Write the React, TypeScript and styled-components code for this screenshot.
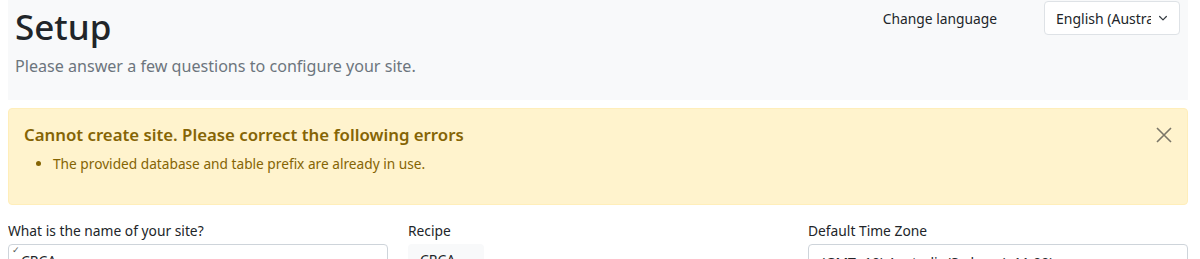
import React from 'react';
import styled, {createGlobalStyle} from 'styled-components';

const GlobalStyle = createGlobalStyle`
  body {
    margin: 0 12px 0 8px;
    font-family: "Noto Sans", "Open Sans", sans-serif;
    color: #212529;
    background: #fff;
  }
`;

const App: React.FC = () => {
  return (
    <>
      <GlobalStyle />
      <Jumbotron>
        <TitleBlock>
          <Title>Setup</Title>
          <Lead>Please answer a few questions to configure your site.</Lead>
        </TitleBlock>
        <LanguageGroup>
          <LanguageLabel>Change language</LanguageLabel>
          <LanguageSelect>
            <SelectText>English (Australia)</SelectText>
            <Chevron viewBox='0 0 16 16'>
              <path d='M3.5 6l4.5 4.5L12.5 6' fill='none' stroke='#343a40' strokeWidth='1.6' strokeLinecap='round' strokeLinejoin='round' />
            </Chevron>
          </LanguageSelect>
        </LanguageGroup>
      </Jumbotron>

      <Alert>
        <AlertBody>
          <AlertHeading>Cannot create site. Please correct the following errors</AlertHeading>
          <ErrorList>
            <li>The provided database and table prefix are already in use.</li>
          </ErrorList>
        </AlertBody>
        <CloseButton aria-label='Close'>
          <svg width='16' height='16' viewBox='0 0 16 16'>
            <path d='M1 1l14 14M15 1L1 15' stroke='#7a7668' strokeWidth='1.6' />
          </svg>
        </CloseButton>
      </Alert>

      <FormRow>
        <Field>
          <Label>What is the name of your site?</Label>
          <TextInput>
            <Check>✓</Check>
            CRCA
          </TextInput>
        </Field>
        <Field>
          <Label>Recipe</Label>
          <RecipeButton>
            CRCA <Caret>▼</Caret>
          </RecipeButton>
        </Field>
        <Field $last>
          <Label>Default Time Zone</Label>
          <SelectBox>
            <span>(GMT+10) Australia/Sydney (+11:00)</span>
            <Chevron viewBox='0 0 16 16'>
              <path d='M3.5 6l4.5 4.5L12.5 6' fill='none' stroke='#343a40' strokeWidth='1.6' strokeLinecap='round' strokeLinejoin='round' />
            </Chevron>
          </SelectBox>
        </Field>
      </FormRow>
    </>
  );
};

export default App;

const Jumbotron = styled.div`
  display: flex;
  justify-content: space-between;
  align-items: flex-start;
  height: 100px;
  box-sizing: border-box;
  background: #f8f9fa;
  padding: 1px 8px 0 7px;
`;

const TitleBlock = styled.div`
  display: flex;
  flex-direction: column;
`;

const Title = styled.h1`
  margin: 2px 0 0;
  font-size: 35px;
  font-weight: 500;
  line-height: 48px;
  color: #212529;
`;

const Lead = styled.p`
  margin: 4px 0 0;
  font-size: 16.1px;
  font-weight: 400;
  color: #6c757d;
`;

const LanguageGroup = styled.div`
  display: flex;
  align-items: center;
  gap: 47px;
`;

const LanguageLabel = styled.span`
  font-size: 13.8px;
  color: #212529;
`;

const LanguageSelect = styled.div`
  display: flex;
  align-items: center;
  gap: 6px;
  box-sizing: border-box;
  width: 136px;
  height: 34px;
  padding: 0 10px 0 11px;
  background: #fff;
  border: 1px solid #dee2e6;
  border-radius: 4px;
  font-size: 14px;
  color: #212529;
`;

const SelectText = styled.span`
  flex: 1;
  white-space: nowrap;
  overflow: hidden;
`;

const Chevron = styled.svg`
  width: 12px;
  height: 12px;
  flex-shrink: 0;
`;

const Alert = styled.div`
  display: flex;
  justify-content: space-between;
  align-items: flex-start;
  box-sizing: border-box;
  height: 97px;
  margin-top: 8px;
  padding: 14px 15px 0 15px;
  background: #fff3cd;
  border: 1px solid #ffeeba;
  border-radius: 4px;
  color: #856404;
`;

const AlertBody = styled.div``;

const AlertHeading = styled.h4`
  margin: 0;
  font-size: 16.8px;
  font-weight: 600;
  line-height: 24px;
`;

const ErrorList = styled.ul`
  margin: 7px 0 0;
  padding-left: 29px;
  font-size: 13.7px;
  line-height: 20px;
`;

const CloseButton = styled.button`
  margin-top: 4px;
  margin-right: 0;
  padding: 0;
  border: none;
  background: transparent;
  cursor: pointer;
`;

const FormRow = styled.div`
  display: grid;
  grid-template-columns: 400px 400px 1fr;
  margin-top: 16px;
`;

const Field = styled.div<{$last?: boolean}>`
  display: flex;
  flex-direction: column;
  align-items: flex-start;
  padding-right: ${(p) => (p.$last ? '0' : '20px')};
`;

const Label = styled.label`
  font-size: 13.8px;
  line-height: 20px;
  margin-bottom: 3px;
  color: #212529;
`;

const TextInput = styled.div`
  position: relative;
  box-sizing: border-box;
  width: 100%;
  height: 36px;
  padding: 6px 12px;
  border: 1px solid #ced4da;
  border-radius: 4px;
  font-size: 14px;
  color: #212529;
`;

const Check = styled.span`
  position: absolute;
  left: 3px;
  top: -2px;
  font-size: 9px;
  color: #555;
`;

const RecipeButton = styled.div`
  box-sizing: border-box;
  height: 36px;
  padding: 6px 12px;
  background: #f8f9fa;
  border-radius: 4px;
  font-size: 14px;
  color: #212529;
`;

const Caret = styled.span`
  font-size: 9px;
  margin-left: 4px;
`;

const SelectBox = styled.div`
  display: flex;
  align-items: center;
  justify-content: space-between;
  box-sizing: border-box;
  width: 100%;
  height: 36px;
  padding: 6px 14px 6px 12px;
  border: 1px solid #ced4da;
  border-radius: 4px;
  font-size: 14px;
  color: #212529;
`;
